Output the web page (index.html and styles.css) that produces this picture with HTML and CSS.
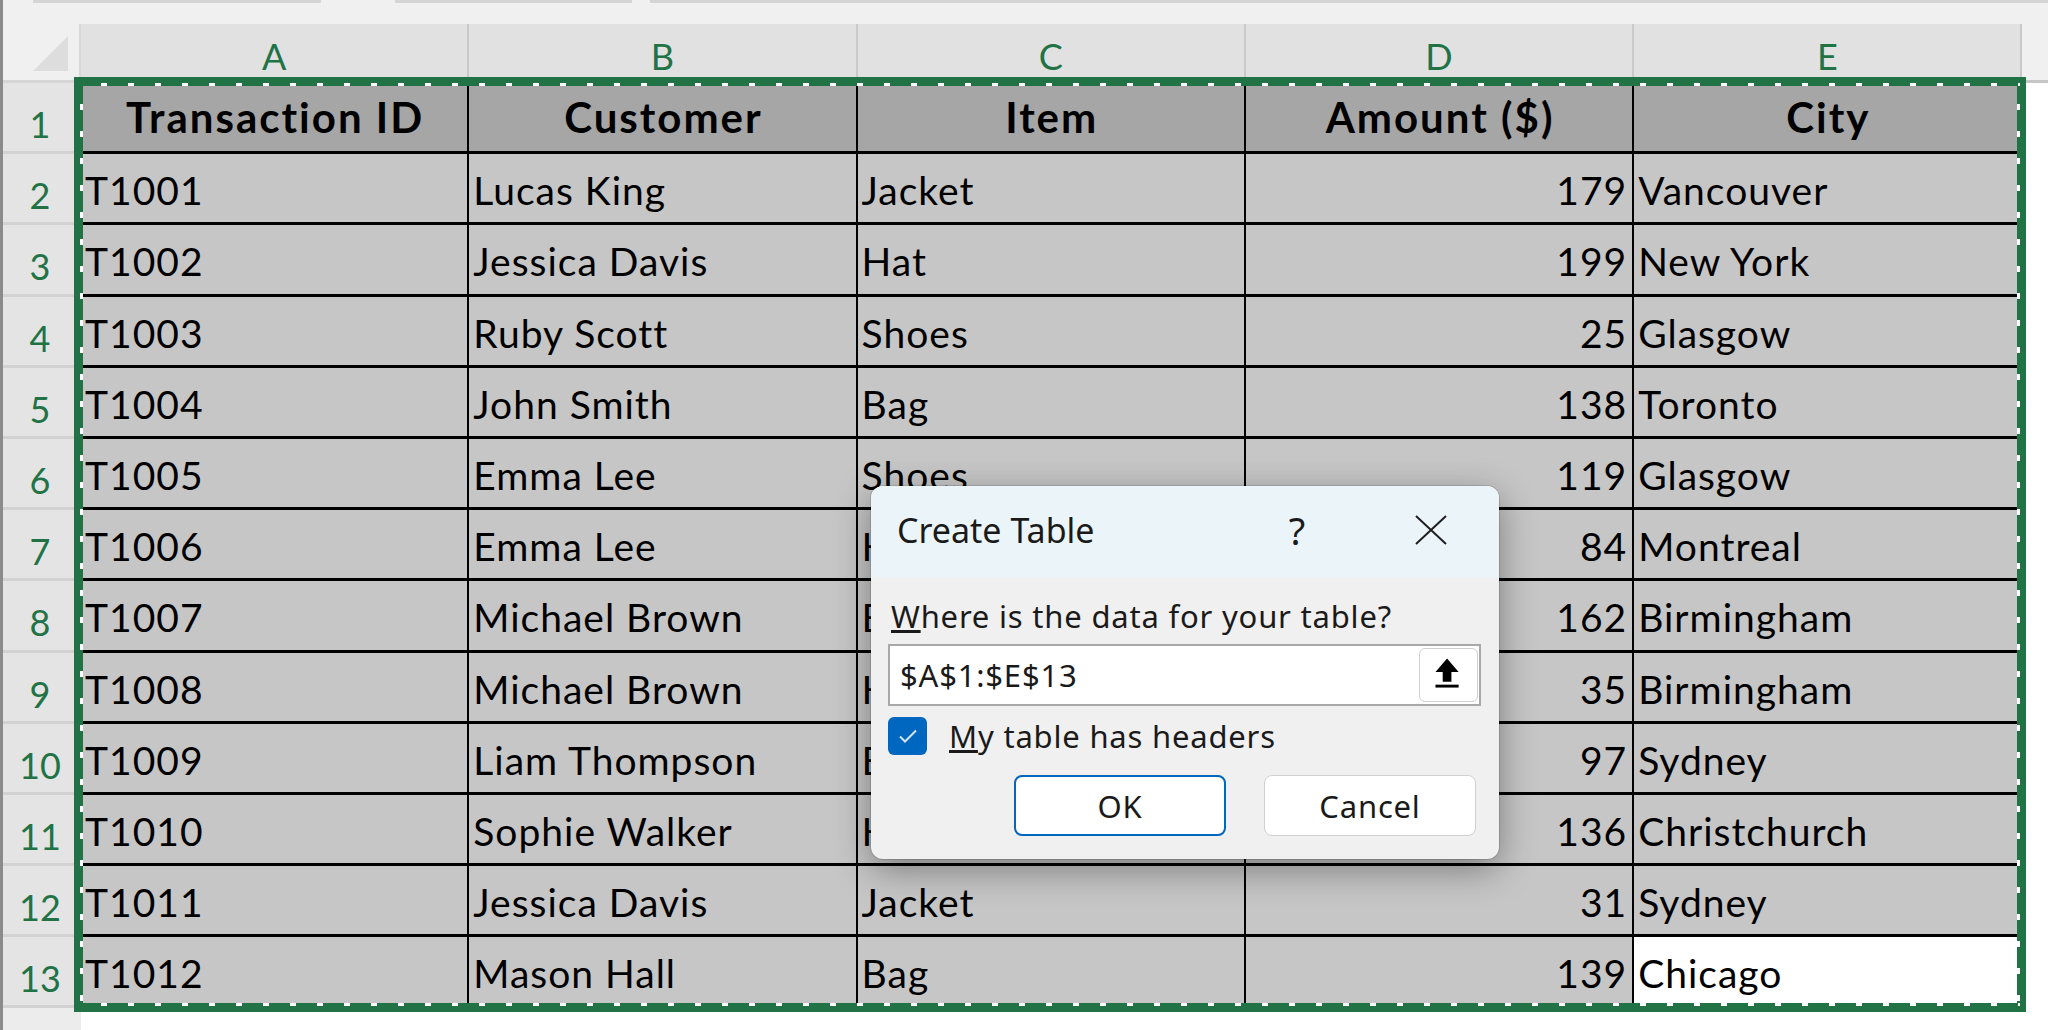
FILE: index.html
```html
<!DOCTYPE html>
<html>
<head>
    <title>Create Table</title>
    <link rel="stylesheet" href="styles.css">
</head>
<body>
    <div class="app">
        <div class="top-edge">
            <div class="tab-lines">
                <span class="tab-line first"></span>
                <span class="tab-line second"></span>
                <span class="tab-line rest"></span>
            </div>
        </div>
        <div class="sheet">
            <div class="corner">
                <svg width="35" height="35" viewBox="0 0 35 35"><polygon points="0,35 35,35 35,0" fill="#dddddd"/></svg>
            </div>
            <div class="col-head">A</div>
            <div class="col-head">B</div>
            <div class="col-head">C</div>
            <div class="col-head">D</div>
            <div class="col-head">E</div>
            <div class="col-fill"></div>

            <div class="row-head">1</div>
            <div class="row-head">2</div>
            <div class="row-head">3</div>
            <div class="row-head">4</div>
            <div class="row-head">5</div>
            <div class="row-head">6</div>
            <div class="row-head">7</div>
            <div class="row-head">8</div>
            <div class="row-head">9</div>
            <div class="row-head">10</div>
            <div class="row-head">11</div>
            <div class="row-head">12</div>
            <div class="row-head">13</div>
            <div class="row-fill"></div>

            <div class="range">
                <div class="cell head">Transaction ID</div>
                <div class="cell head">Customer</div>
                <div class="cell head">Item</div>
                <div class="cell head">Amount ($)</div>
                <div class="cell head">City</div>

                <div class="cell">T1001</div><div class="cell">Lucas King</div><div class="cell">Jacket</div><div class="cell num">179</div><div class="cell">Vancouver</div>
                <div class="cell">T1002</div><div class="cell">Jessica Davis</div><div class="cell">Hat</div><div class="cell num">199</div><div class="cell">New York</div>
                <div class="cell">T1003</div><div class="cell">Ruby Scott</div><div class="cell">Shoes</div><div class="cell num">25</div><div class="cell">Glasgow</div>
                <div class="cell">T1004</div><div class="cell">John Smith</div><div class="cell">Bag</div><div class="cell num">138</div><div class="cell">Toronto</div>
                <div class="cell">T1005</div><div class="cell">Emma Lee</div><div class="cell">Shoes</div><div class="cell num">119</div><div class="cell">Glasgow</div>
                <div class="cell">T1006</div><div class="cell">Emma Lee</div><div class="cell">Hat</div><div class="cell num">84</div><div class="cell">Montreal</div>
                <div class="cell">T1007</div><div class="cell">Michael Brown</div><div class="cell">Bag</div><div class="cell num">162</div><div class="cell">Birmingham</div>
                <div class="cell">T1008</div><div class="cell">Michael Brown</div><div class="cell">Hat</div><div class="cell num">35</div><div class="cell">Birmingham</div>
                <div class="cell">T1009</div><div class="cell">Liam Thompson</div><div class="cell">Bag</div><div class="cell num">97</div><div class="cell">Sydney</div>
                <div class="cell">T1010</div><div class="cell">Sophie Walker</div><div class="cell">Hat</div><div class="cell num">136</div><div class="cell">Christchurch</div>
                <div class="cell">T1011</div><div class="cell">Jessica Davis</div><div class="cell">Jacket</div><div class="cell num">31</div><div class="cell">Sydney</div>
                <div class="cell">T1012</div><div class="cell">Mason Hall</div><div class="cell">Bag</div><div class="cell num">139</div><div class="cell active">Chicago</div>
            </div>
        </div>
    </div>

    <div class="dialog">
        <div class="dialog-title">
            <span class="title">Create Table</span>
            <span class="help">?</span>
            <svg class="close" width="32" height="30" viewBox="0 0 32 30"><path d="M1 1 L31 29 M31 1 L1 29" stroke="#1f1f1f" stroke-width="2" fill="none"/></svg>
        </div>
        <div class="dialog-body">
            <div class="prompt"><u>W</u>here is the data for your table?</div>
            <div class="range-input">
                <span class="ref">$A$1:$E$13</span>
                <span class="pick-btn">
                    <svg width="59" height="54" viewBox="0 0 59 54">
                        <path d="M28 10 L40 24 L32.5 24 L32.5 34 L23.5 34 L23.5 24 L16 24 Z" fill="#000"/>
                        <rect x="16" y="37" width="24" height="3" fill="#000"/>
                    </svg>
                </span>
            </div>
            <div class="check-row">
                <span class="checkbox">
                    <svg width="26" height="26" viewBox="0 0 26 26"><path d="M5 13.5 L10 18.5 L21 7.5" stroke="#d4e6f7" stroke-width="2" fill="none"/></svg>
                </span>
                <span class="check-label"><u>M</u>y table has headers</span>
            </div>
            <div class="buttons">
                <div class="btn primary">OK</div>
                <div class="btn">Cancel</div>
            </div>
        </div>
    </div>
</body>
</html>
```

FILE: styles.css
```css
* {
    box-sizing: border-box;
}
body {
    margin: 0;
    width: 2048px;
    height: 1030px;
    overflow: hidden;
    background-color: #ffffff;
    font-family: Lato, 'Liberation Sans', sans-serif;
    color: #000000;
}
.app {
    height: 1030px;
    border-left: 3px solid #8b8b8b;
    display: flex;
    flex-direction: column;
}
.top-edge {
    flex: none;
    height: 24px;
    background-color: #f0f0f0;
}
.tab-lines {
    display: flex;
    height: 3px;
}
.tab-line {
    background-color: #d5d5d5;
}
.tab-line.first {
    margin-left: 30px;
    width: 288px;
}
.tab-line.second {
    margin-left: 74px;
    width: 237px;
}
.tab-line.rest {
    margin-left: 18px;
    flex: 1;
}
.sheet {
    flex: 1;
    display: grid;
    grid-template-columns: 78px repeat(5, 388.3px) 1fr;
    grid-template-rows: 59px repeat(13, 71.2px) 1fr;
}
.corner {
    background-color: #f0f0f0;
    border-bottom: 3px solid #d6d6d6;
    border-right: 2px solid #d8d8d8;
    display: flex;
    justify-content: flex-end;
    align-items: flex-end;
    padding: 0 11px 9px 0;
}
.col-head {
    background-color: #e1e1e1;
    border-right: 2px solid #c9c9c9;
    color: #217346;
    font-size: 36px;
    display: flex;
    align-items: center;
    justify-content: center;
    padding-top: 4px;
}
.col-fill {
    background-color: #f0f0f0;
    border-bottom: 3px solid #c6c6c6;
}
.row-head {
    grid-column: 1;
    background-color: #e4e4e4;
    border-bottom: 3px solid #d2d2d2;
    color: #217346;
    font-size: 36px;
    display: flex;
    align-items: center;
    justify-content: center;
    padding: 14px 4px 0 0;
}
.row-fill {
    grid-column: 1;
    background-color: #ececec;
}
.range {
    grid-column: 2 / 7;
    grid-row: 2 / 15;
    display: grid;
    grid-template-columns: repeat(5, 1fr);
    grid-template-rows: repeat(13, 1fr);
    position: relative;
}
/* marching ants round the selected range */
.range::after {
    content: "";
    position: absolute;
    top: -6px;
    right: -4px;
    bottom: -4px;
    left: -7px;
    border: 6px solid #217346;
    pointer-events: none;
}
.range::before {
    content: "";
    position: absolute;
    top: 0;
    right: 2px;
    bottom: 2px;
    left: -1px;
    pointer-events: none;
    z-index: 1;
    background:
        repeating-linear-gradient(90deg, #217346 0 21px, #ffffff 21px 27px) top / 100% 3px no-repeat,
        repeating-linear-gradient(90deg, #217346 0 21px, #ffffff 21px 27px) bottom / 100% 3px no-repeat,
        repeating-linear-gradient(180deg, #217346 0 21px, #ffffff 21px 27px) left / 3px 100% no-repeat,
        repeating-linear-gradient(180deg, #217346 0 21px, #ffffff 21px 27px) right / 3px 100% no-repeat;
}
.cell {
    background-color: #c6c6c6;
    border-right: 2px solid #000000;
    border-bottom: 3px solid #000000;
    font-size: 39px;
    letter-spacing: 1px;
    display: flex;
    align-items: center;
    padding: 4px 0 0 4px;
    white-space: nowrap;
    overflow: hidden;
}
.cell.head {
    background-color: #a6a6a6;
    font-size: 42px;
    font-weight: bold;
    letter-spacing: 2px;
    justify-content: center;
    padding: 0 0 0 2px;
}
.cell.num {
    justify-content: flex-end;
    padding-right: 5px;
}
.cell.active {
    background-color: #ffffff;
}
.dialog {
    position: absolute;
    left: 871px;
    top: 486px;
    width: 628px;
    height: 373px;
    background-color: #f0f0f0;
    border-radius: 12px;
    box-shadow: 0 0 0 1px rgba(0, 0, 0, 0.12), 0 10px 36px rgba(0, 0, 0, 0.38);
    overflow: hidden;
    font-family: 'Noto Sans', 'Open Sans', sans-serif;
    color: #1a1a1a;
    z-index: 2;
}
.dialog-title {
    height: 91px;
    background-color: #ebf5f9;
    display: flex;
    align-items: center;
    padding: 0 52px 4px 26px;
    font-size: 34px;
}
.title {
    flex: 1;
}
.help {
    width: 40px;
    text-align: center;
    font-size: 38px;
}
.close {
    margin-left: 98px;
}
.dialog-body {
    padding: 19px 18px 0 17px;
    font-size: 31px;
    letter-spacing: 0.8px;
}
.prompt {
    margin-left: 3px;
    line-height: 40px;
}
.range-input {
    margin-top: 8px;
    height: 62px;
    border: 2px solid #a8a8a8;
    background-color: #ffffff;
    display: flex;
    align-items: center;
    padding: 0 1px 0 10px;
}
.ref {
    flex: 1;
}
.pick-btn {
    width: 59px;
    height: 54px;
    border: 1px solid #d0d0d0;
    border-radius: 6px;
    background-color: #ffffff;
    display: flex;
    align-items: center;
    justify-content: center;
}
.check-row {
    margin-top: 10px;
    display: flex;
    align-items: center;
    gap: 22px;
    line-height: 40px;
}
.checkbox {
    width: 39px;
    height: 38px;
    border-radius: 6px;
    background-color: #0067c0;
    display: flex;
    align-items: center;
    justify-content: center;
}
.buttons {
    margin-top: 19px;
    margin-right: 5px;
    display: flex;
    justify-content: flex-end;
    gap: 38px;
}
.btn {
    width: 212px;
    height: 61px;
    border-radius: 8px;
    background-color: #ffffff;
    border: 1px solid #d0d0d0;
    display: flex;
    align-items: center;
    justify-content: center;
}
.btn.primary {
    border: 2px solid #0067c0;
}
```
